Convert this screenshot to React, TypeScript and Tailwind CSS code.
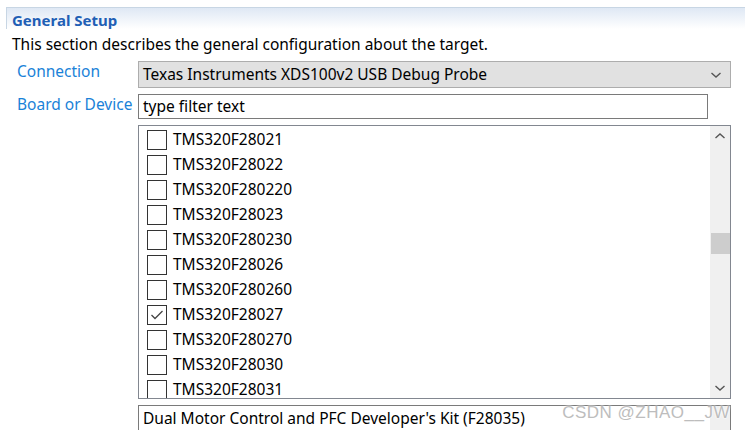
import React from "react";

const devices = [
  "TMS320F28021",
  "TMS320F28022",
  "TMS320F280220",
  "TMS320F28023",
  "TMS320F280230",
  "TMS320F28026",
  "TMS320F280260",
  "TMS320F28027",
  "TMS320F280270",
  "TMS320F28030",
  "TMS320F28031",
];

const Chevron = ({ up = false }: { up?: boolean }) => (
  <svg width="12" height="8" viewBox="0 0 12 8" className={up ? "rotate-180" : ""}>
    <path d="M1.5 2 L6 6 L10.5 2" fill="none" stroke="#555" strokeWidth="1.4" />
  </svg>
);

const App: React.FC = () => {
  return (
    <div
      className="w-[745px] h-[430px] overflow-hidden bg-white text-[15.5px] text-black"
      style={{ fontFamily: '"Noto Sans", "Open Sans", sans-serif' }}
    >
      <div className="ml-[6px] mt-[7px] border-t border-l border-[#c8d6e4]">
        <div className="h-[21px] pl-[5px] bg-gradient-to-b from-[#dfe8f4] to-white text-[#1f5fb5] text-[15px] font-bold leading-[24px]">
          General Setup
        </div>
      </div>
      <div className="pl-[12px] h-[26px] leading-[30px]">
        This section describes the general configuration about the target.
      </div>

      <div className="mt-[6px] flex">
        <div className="w-[138px] pl-[17px] text-[#1a82d8]">
          <div className="h-[27px] leading-[21px]">Connection</div>
          <div className="mt-[6px] h-[25px] leading-[21px]">Board or Device</div>
        </div>
        <div className="flex flex-col">
          <div className="w-[593px] h-[27px] bg-[#e1e1e1] border border-[#adadad] flex items-center pl-[4px] pr-[8px]">
            <span className="flex-1">Texas Instruments XDS100v2 USB Debug Probe</span>
            <Chevron />
          </div>
          <div className="mt-[6px] w-[570px] h-[25px] border border-[#7a7a7a] flex items-center pl-[4px]">
            type filter text
          </div>
          <div className="mt-[6px] w-[593px] h-[274px] border border-[#828790] flex overflow-hidden">
            <div className="flex-1 pt-[1px] pl-[8px]">
              {devices.map((d) => (
                <div key={d} className="h-[25px] flex items-center">
                  <div className="w-[20px] h-[20px] border border-[#333] bg-white flex items-center justify-center">
                    {d === "TMS320F28027" && (
                      <svg width="14" height="12" viewBox="0 0 14 12">
                        <path d="M1.5 6 L5 9.5 L12.5 2" fill="none" stroke="#444" strokeWidth="1.3" />
                      </svg>
                    )}
                  </div>
                  <span className="ml-[6px]">{d}</span>
                </div>
              ))}
            </div>
            <div className="w-[20px] bg-[#f0f0f0] flex flex-col items-center">
              <div className="h-[20px] flex items-center justify-center">
                <Chevron up />
              </div>
              <div className="h-[87px]" />
              <div className="w-[19px] h-[21px] bg-[#cdcdcd]" />
              <div className="flex-1" />
              <div className="h-[20px] flex items-center justify-center">
                <Chevron />
              </div>
            </div>
          </div>
          <div className="mt-[6px] w-[593px] h-[30px] border border-[#7a7a7a] flex relative">
            <div className="flex-1 pl-[4px] pt-[1px]">
              Dual Motor Control and PFC Developer's Kit (F28035)
            </div>
            <div className="w-[20px] bg-[#f0f0f0]" />
            <div
              className="absolute right-[0px] top-[-6px] text-[17px] text-[#bdbdbd] tracking-[0.5px]"
              style={{ fontFamily: '"Liberation Sans", sans-serif', textShadow: "0 0 2px #fff, 0 0 2px #fff" }}
            >
              CSDN @ZHAO__JW
            </div>
          </div>
        </div>
      </div>
    </div>
  );
};

export default App;
